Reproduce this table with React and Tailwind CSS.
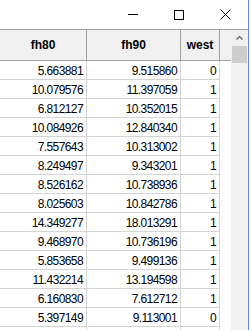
import React from "react";

const rows = [
  ["5.663881", "9.515860", "0"],
  ["10.079576", "11.397059", "1"],
  ["6.812127", "10.352015", "1"],
  ["10.084926", "12.840340", "1"],
  ["7.557643", "10.313002", "1"],
  ["8.249497", "9.343201", "1"],
  ["8.526162", "10.738936", "1"],
  ["8.025603", "10.842786", "1"],
  ["14.349277", "18.013291", "1"],
  ["9.468970", "10.736196", "1"],
  ["5.853658", "9.499136", "1"],
  ["11.432214", "13.194598", "1"],
  ["6.160830", "7.612712", "1"],
  ["5.397149", "9.113001", "0"],
  ["", "", ""],
];

export default function App() {
  return (
    <div
      className="w-[251px] h-[330px] bg-white overflow-hidden flex"
      style={{ fontFamily: '"Liberation Sans", Arial, sans-serif' }}
    >
      <div className="w-[248px] h-full flex flex-col">
        {/* title bar */}
        <div className="h-[29px] flex justify-end bg-white shrink-0">
          <div className="w-[46px] h-full flex items-center justify-center">
            <div className="w-[10px] h-px bg-black" />
          </div>
          <div className="w-[46px] h-full flex items-center justify-center">
            <div className="w-[10px] h-[10px] border border-black" />
          </div>
          <div className="w-[46px] h-full flex items-center justify-center">
            <svg width="11" height="11" viewBox="0 0 11 11">
              <path d="M0.5 0.5 L10.5 10.5 M10.5 0.5 L0.5 10.5" stroke="#000" strokeWidth="1" />
            </svg>
          </div>
        </div>
        {/* grid + scrollbar */}
        <div className="flex-1 flex border-t border-[#a0a0a0] overflow-hidden">
          <div className="w-[231px] flex flex-col">
            <div className="h-[31px] flex bg-[#f0f0f0] border-b border-[#a0a0a0] shrink-0 text-[12px] font-bold text-black">
              <div className="w-[87px] border-r border-[#a0a0a0] flex items-center justify-center">fh80</div>
              <div className="w-[94px] border-r border-[#a0a0a0] flex items-center justify-center">fh90</div>
              <div className="w-[39px] border-r border-[#a0a0a0] flex items-center justify-center">west</div>
              <div className="flex-1" />
            </div>
            {rows.map((r, i) => (
              <div
                key={i}
                className="h-[19px] flex shrink-0 text-[12px] tracking-[-0.6px] text-black"
              >
                <div className="w-[87px] border-r border-b border-[#d4d4d4] flex items-center justify-end pr-[3px] pt-px">{r[0]}</div>
                <div className="w-[94px] border-r border-b border-[#d4d4d4] flex items-center justify-end pr-[3px] pt-px">{r[1]}</div>
                <div className="w-[39px] border-r border-b border-[#d4d4d4] flex items-center justify-end pr-[3px] pt-px">{r[2]}</div>
                <div className="flex-1" />
              </div>
            ))}
          </div>
          <div className="w-[17px] bg-[#f0f0f0] flex flex-col items-center">
            <div className="h-[16px] w-full flex items-center justify-center">
              <svg width="7" height="4" viewBox="0 0 7 4">
                <path d="M0.5 3.5 L3.5 0.5 L6.5 3.5" stroke="#606060" strokeWidth="1.2" fill="none" />
              </svg>
            </div>
            <div className="w-[15px] h-[17px] bg-[#cdcdcd]" />
          </div>
        </div>
      </div>
      <div className="w-px h-full bg-[#5b8fc7]" />
      <div className="w-[2px] h-full bg-white" />
    </div>
  );
}
